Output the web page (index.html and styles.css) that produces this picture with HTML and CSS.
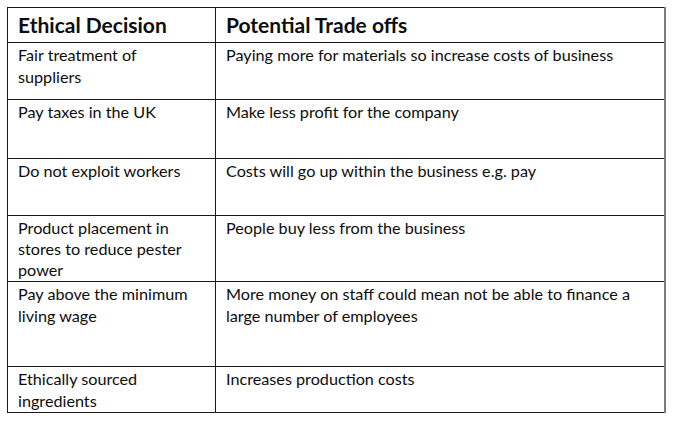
FILE: index.html
```html
<!DOCTYPE html>
<html lang="en">
<head>
<meta charset="utf-8">
<title>Ethical Decisions and Trade offs</title>
<link rel="stylesheet" href="styles.css">
</head>
<body>
<table class="ethics">
  <colgroup>
    <col class="col-decision">
    <col class="col-tradeoff">
  </colgroup>
  <thead>
    <tr class="row-head">
      <th>Ethical Decision</th>
      <th>Potential Trade offs</th>
    </tr>
  </thead>
  <tbody>
    <tr class="row-1">
      <td>Fair treatment of suppliers</td>
      <td>Paying more for materials so increase costs of business</td>
    </tr>
    <tr class="row-2">
      <td>Pay taxes in the UK</td>
      <td>Make less profit for the company</td>
    </tr>
    <tr class="row-3">
      <td>Do not exploit workers</td>
      <td>Costs will go up within the business e.g. pay</td>
    </tr>
    <tr class="row-4">
      <td>Product placement in stores to reduce pester power</td>
      <td>People buy less from the business</td>
    </tr>
    <tr class="row-5">
      <td>Pay above the minimum living wage</td>
      <td>More money on staff could mean not be able to finance a large number of employees</td>
    </tr>
    <tr class="row-6">
      <td>Ethically sourced ingredients</td>
      <td>Increases production costs</td>
    </tr>
  </tbody>
</table>
</body>
</html>
```
FILE: styles.css
```css
html, body {
  margin: 0;
  padding: 0;
  background: #ffffff;
}

body {
  padding: 7px 0 0 7px;
  font-family: Lato, "Open Sans", sans-serif;
  color: #0d0d0d;
}

.ethics {
  border-collapse: collapse;
  width: 657px;
  table-layout: fixed;
}

.col-decision { width: 208px; }
.col-tradeoff { width: 449px; }

.ethics th,
.ethics td {
  border: 1px solid #1a1a1a;
  vertical-align: top;
  text-align: left;
  padding: 1px 13px 0 10px;
  font-size: 16.2px;
  line-height: 22px;
  overflow: hidden;
}

.ethics th {
  font-size: 21px;
  font-weight: 700;
  vertical-align: middle;
  padding-top: 0;
}

.ethics td:last-child,
.ethics th:last-child {
  border-right: 2px solid #7a7a7a;
}

.row-head { height: 35px; }
.row-1 { height: 57px; }
.row-2 { height: 59px; }
.row-3 { height: 57px; }
.row-4 { height: 66px; }
.row-5 { height: 85px; }
.row-6 { height: 45px; }

.row-4 td {
  line-height: 21px;
  padding-top: 1px;
}
```
